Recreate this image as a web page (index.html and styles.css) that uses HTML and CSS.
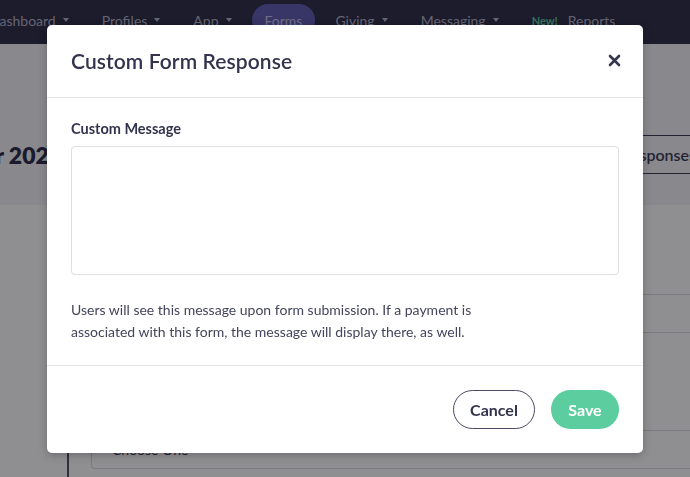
FILE: index.html
```html
<!DOCTYPE html>
<html lang="en">
<head>
<meta charset="utf-8">
<title>Custom Form Response</title>
<link rel="stylesheet" href="styles.css">
</head>
<body>
<div class="page">
  <nav class="topnav">
    <span class="nav-item">Dashboard <span class="caret"></span></span>
    <span class="nav-item">Profiles <span class="caret"></span></span>
    <span class="nav-item">App <span class="caret"></span></span>
    <span class="nav-item active">Forms</span>
    <span class="nav-item">Giving <span class="caret"></span></span>
    <span class="nav-item">Messaging <span class="caret"></span></span>
    <span class="nav-item"><span class="new">New!</span> Reports</span>
  </nav>
  <header class="page-header">
    <h1 class="page-title">Summer 2021</h1>
    <button class="outline-btn">View Responses</button>
  </header>
  <main class="page-content">
    <div class="side"></div>
    <div class="form-area">
      <div class="field-gap"></div>
      <div class="input"></div>
      <div class="field-gap2"></div>
      <div class="input select">Choose One</div>
    </div>
  </main>
</div>

<div class="overlay">
  <div class="modal">
    <div class="modal-header">
      <h2 class="modal-title">Custom Form Response</h2>
      <button class="close" aria-label="Close">
        <svg width="13" height="13" viewBox="0 0 13 13"><path d="M2 2 L11 11 M11 2 L2 11" stroke="#363650" stroke-width="2.6" stroke-linecap="round"/></svg>
      </button>
    </div>
    <div class="modal-body">
      <label class="label">Custom Message</label>
      <div class="textarea"></div>
      <p class="help">Users will see this message upon form submission. If a payment is associated with this form, the message will display there, as well.</p>
    </div>
    <div class="modal-footer">
      <button class="btn btn-cancel">Cancel</button>
      <button class="btn btn-save">Save</button>
    </div>
  </div>
</div>
</body>
</html>
```

FILE: styles.css
```css
* { box-sizing: border-box; }
html, body { margin: 0; padding: 0; }
body {
  font-family: Lato, "Open Sans", sans-serif;
  width: 690px;
  height: 477px;
  overflow: hidden;
  background: #fafafb;
}
.page { width: 690px; height: 477px; overflow: hidden; }

.topnav {
  height: 44px;
  background: #262640;
  display: flex;
  align-items: center;
  padding-bottom: 4px;
  margin-left: -24px;
  gap: 7px;
  white-space: nowrap;
}
.nav-item {
  color: #b0b0c4;
  font-size: 14px;
  padding: 0 13px;
  height: 32px;
  display: flex;
  align-items: center;
  gap: 7px;
}
.nav-item.active {
  background: #5c57ad;
  border-radius: 16px;
  color: #c4c1ea;
}
.caret {
  width: 0; height: 0;
  border-left: 3.5px solid transparent;
  border-right: 3.5px solid transparent;
  border-top: 4px solid #b0b0c4;
}
.new { color: #5cc89a; font-weight: 700; font-size: 11px; margin-right: 3px; }

.page-header {
  height: 161px;
  background: #f3f3f6;
  display: flex;
  align-items: center;
  justify-content: space-between;
  padding: 60px 0 0 0;
  margin-left: -82px;
  margin-right: -25px;
}
.page-title { margin: 0; font-size: 23px; font-weight: 800; color: #242440; }
.outline-btn {
  font-family: inherit;
  font-size: 16px;
  font-weight: 600;
  color: #33334d;
  background: transparent;
  border: 1px solid #33334d;
  border-radius: 6px;
  height: 39px;
  padding: 0 18px;
}

.page-content { display: flex; height: 272px; background: #ffffff; }
.side { width: 69px; border-right: 2px solid #4a4a60; margin-top: 240px; }
.form-area { flex: 1; padding-left: 22px; }
.field-gap { height: 89px; }
.field-gap2 { height: 97px; }
.input {
  height: 39px;
  border: 1px solid #d7d7df;
  border-right: none;
  border-radius: 4px 0 0 4px;
}
.select { padding: 10px 20px; color: #33334d; font-size: 14px; }

.overlay {
  position: fixed;
  inset: 0;
  background: rgba(18, 18, 24, 0.47);
  display: flex;
  justify-content: center;
  align-items: flex-start;
  padding-top: 25px;
}
.modal {
  width: 596px;
  background: #ffffff;
  border-radius: 5px;
  box-shadow: 0 2px 8px rgba(0, 0, 0, 0.25);
}
.modal-header {
  height: 73px;
  display: flex;
  align-items: center;
  justify-content: space-between;
  padding: 0 22px 2px 24px;
  border-bottom: 1px solid #e6e6ec;
}
.modal-title {
  margin: 0;
  font-size: 21px;
  font-weight: 600;
  color: #33334d;
  letter-spacing: 0.1px;
}
.close {
  background: none;
  border: none;
  padding: 0;
  width: 14px;
  height: 14px;
  display: flex;
  align-items: center;
  justify-content: center;
  cursor: pointer;
}
.modal-body {
  padding: 22px 24px 22px 24px;
  border-bottom: 1px solid #e6e6ec;
}
.label {
  display: block;
  font-size: 14.5px;
  font-weight: 700;
  color: #33334d;
  line-height: 18px;
  margin-bottom: 8px;
}
.textarea {
  height: 129px;
  border: 1px solid #dedee6;
  border-radius: 4px;
}
.help {
  margin: 24px 0 0;
  font-size: 14px;
  line-height: 22px;
  color: #44445c;
  max-width: 440px;
}
.modal-footer {
  height: 87px;
  display: flex;
  justify-content: flex-end;
  align-items: center;
  gap: 16px;
  padding: 0 24px 1px;
}
.btn {
  font-family: inherit;
  font-size: 16px;
  font-weight: 700;
  height: 39px;
  border-radius: 20px;
  cursor: pointer;
}
.btn-cancel {
  width: 82px;
  background: #ffffff;
  color: #33334d;
  border: 1px solid #4a4a64;
}
.btn-save {
  width: 68px;
  background: #5ccd9f;
  color: #ffffff;
  border: none;
}
```
